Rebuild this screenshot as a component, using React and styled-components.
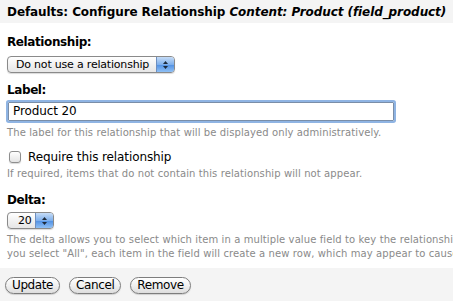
import React from "react";
import styled, { createGlobalStyle } from "styled-components";

const GlobalStyle = createGlobalStyle`
  html, body {
    margin: 0;
    padding: 0;
    background: #ffffff;
    overflow: hidden;
  }
  body {
    font-family: "DejaVu Sans", Verdana, sans-serif;
    color: #000;
  }
`;

const Page = styled.div`
  width: 453px;
  height: 301px;
  display: flex;
  flex-direction: column;
  overflow: hidden;
`;

const Header = styled.div`
  height: 23px;
  line-height: 25px;
  padding: 0 7px;
  background: #f4f4f4;
  font-size: 12px;
  font-weight: bold;
  white-space: nowrap;
  letter-spacing: -0.08px;

  em {
    font-style: italic;
  }
`;

const Form = styled.div`
  flex: 1;
  padding: 12px 7px 0;
  white-space: nowrap;
  overflow: hidden;
`;

const Item = styled.div`
  margin-bottom: ${(p) => p.gap || 0}px;
`;

const Label = styled.div`
  font-size: 12px;
  font-weight: bold;
  line-height: 15px;
  margin-bottom: ${(p) => (p.below === undefined ? 3 : p.below)}px;
  letter-spacing: -0.4px;
`;

const SelectBox = styled.div`
  display: inline-flex;
  align-items: stretch;
  width: ${(p) => p.width}px;
  height: 15px;
  border: 1px solid #8a8a8a;
  border-radius: 4px;
  background: linear-gradient(#ffffff, #f2f2f2 50%, #e6e6e6);
  box-shadow: 0 1px 1px rgba(0, 0, 0, 0.15);
  overflow: hidden;
  box-sizing: content-box;
`;

const SelectText = styled.span`
  flex: 1;
  font-family: "DejaVu Sans", sans-serif;
  font-size: 11px;
  line-height: 15px;
  padding-left: ${(p) => p.pad || 8}px;
  letter-spacing: -0.2px;
`;

const Stepper = styled.span`
  width: 17px;
  border-left: 1px solid #6d8fc0;
  background: linear-gradient(#c6dcf7, #7fb0ec 50%, #4f8fe3 51%, #8fc0f5);
  display: flex;
  align-items: center;
  justify-content: center;
`;

const TextInput = styled.div`
  width: 380px;
  height: 17px;
  margin-left: 1px;
  border: 1px solid #7a8ea8;
  box-shadow: 0 0 0 2px #8fb4e3;
  border-radius: 1px;
  font-size: 12px;
  line-height: 17px;
  padding-left: 4px;
  margin-top: 4px;
  letter-spacing: -0.1px;
`;

const Description = styled.div`
  font-size: 10px;
  line-height: 14px;
  color: #8a8a8a;
  margin-top: ${(p) => p.top || 3}px;
  letter-spacing: 0.1px;
`;

const CheckRow = styled.label`
  display: flex;
  align-items: center;
  gap: 7px;
  font-size: 12px;
  line-height: 16px;
  padding-left: 2px;
  letter-spacing: -0.1px;
`;

const CheckBox = styled.span`
  width: 10px;
  height: 10px;
  border: 1px solid #8e8e8e;
  border-radius: 3px;
  background: linear-gradient(#ffffff, #e4e4e4);
  box-shadow: 0 1px 1px rgba(0, 0, 0, 0.15);
`;

const Footer = styled.div`
  height: 33px;
  flex-shrink: 0;
  background: #f4f4f4;
  display: flex;
  align-items: flex-start;
  gap: 9px;
  padding: 9px 5px 0;
  box-sizing: border-box;
`;

const Button = styled.button`
  height: 17px;
  padding: 0 6px;
  border: 1px solid #7d7d7d;
  border-radius: 9px;
  background: linear-gradient(#ffffff, #f0f0f0 50%, #dddddd);
  font-family: "DejaVu Sans", sans-serif;
  font-size: 12px;
  line-height: 15px;
  color: #000;
  box-shadow: 0 1px 1px rgba(0, 0, 0, 0.15);
  letter-spacing: -0.4px;
`;

function Arrows() {
  return (
    <svg width="7" height="10" viewBox="0 0 7 10">
      <polygon points="3.5,1 6,4 1,4" fill="#1d2a3a" />
      <polygon points="3.5,9 6,6 1,6" fill="#1d2a3a" />
    </svg>
  );
}

export default function App() {
  return (
    <Page>
      <GlobalStyle />
      <Header>
        Defaults: Configure Relationship <em>Content: Product (field_product)</em>
      </Header>
      <Form>
        <Item gap={10}>
          <Label>Relationship:</Label>
          <SelectBox width={166}>
            <SelectText>Do not use a relationship</SelectText>
            <Stepper>
              <Arrows />
            </Stepper>
          </SelectBox>
        </Item>
        <Item gap={9}>
          <Label>Label:</Label>
          <TextInput>Product 20</TextInput>
          <Description top={5}>
            The label for this relationship that will be displayed only administratively.
          </Description>
        </Item>
        <Item gap={12}>
          <CheckRow>
            <CheckBox />
            Require this relationship
          </CheckRow>
          <Description top={2}>
            If required, items that do not contain this relationship will not appear.
          </Description>
        </Item>
        <Item>
          <Label below={1}>Delta:</Label>
          <SelectBox width={45}>
            <SelectText pad={10}>20</SelectText>
            <Stepper>
              <Arrows />
            </Stepper>
          </SelectBox>
          <Description top={4}>
            The delta allows you to select which item in a multiple value field to key the relationship off of. If
            <br />
            you select "All", each item in the field will create a new row, which may appear to cause duplicates.
          </Description>
        </Item>
      </Form>
      <Footer>
        <Button>Update</Button>
        <Button>Cancel</Button>
        <Button>Remove</Button>
      </Footer>
    </Page>
  );
}
